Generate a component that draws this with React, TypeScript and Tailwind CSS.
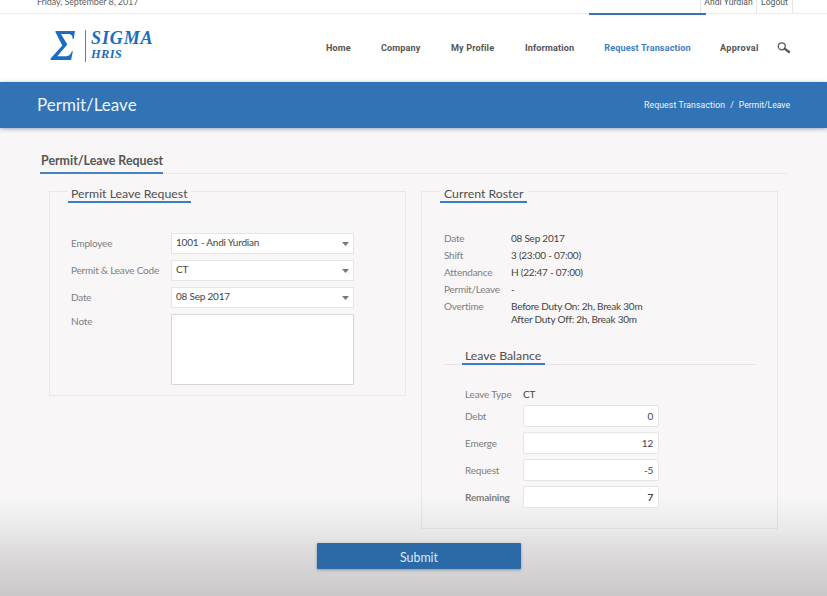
import type { ReactNode } from "react";

const NAV_ITEMS = [
  { label: "Home", className: "ml-0 w-[25px]" },
  { label: "Company", className: "ml-[30px] w-[41px]" },
  { label: "My Profile", className: "ml-[29px] w-[44px]" },
  { label: "Information", className: "ml-[30px] w-[50px]" },
];

const ROSTER = [
  { label: "Date", value: "08 Sep 2017" },
  { label: "Shift", value: "3 (23:00 - 07:00)" },
  { label: "Attendance", value: "H (22:47 - 07:00)" },
  { label: "Permit/Leave", value: "-" },
];

const BALANCE = [
  { label: "Debt", value: "0" },
  { label: "Emerge", value: "12" },
  { label: "Request", value: "-5" },
  { label: "Remaining", value: "7", bold: true },
];

function Legend({ children, className }: { children: ReactNode; className: string }) {
  return (
    <h3
      className={`h-[17px] border-b-2 border-[#3c7fc0] bg-[#f8f6f7] text-[12.3px] leading-[16px] text-[#505050] ${className}`}
    >
      {children}
    </h3>
  );
}

function SelectRow({ label, value }: { label: string; value: string }) {
  return (
    <div className="mb-[6px] flex h-[21px] items-center">
      <label className="w-[100px] text-[10px] tracking-[-0.21px] text-[#808080]">{label}</label>
      <button className="flex h-[21px] w-[183px] items-center justify-between border border-[#e6e4e5] bg-white pr-[4px] pl-[4px] text-[10px] tracking-[-0.21px] text-[#444]">
        <span className="-mt-[2px]">{value}</span>
        <svg width="7" height="4" viewBox="0 0 7 4" className="fill-[#777]">
          <path d="M0 0H7L3.5 4Z" />
        </svg>
      </button>
    </div>
  );
}

export default function App() {
  return (
    <div className="flex h-[596px] w-[827px] flex-col overflow-hidden bg-[linear-gradient(#f8f6f7_0,#f8f6f7_495px,#e9e8e8_532px,#e0dedf_546px,#c9c7c8_596px)] font-[Lato,sans-serif] whitespace-nowrap">
      <div className="flex h-[14px] shrink-0 justify-between overflow-hidden border-b border-[#ececec] bg-white pr-[34px] pl-[37px] text-[#666]">
        <span className="-mt-[5px] text-[9px] leading-[13px] tracking-[-0.1px]">Friday, September 8, 2017</span>
        <div className="flex h-[13px] border-x border-[#e6e6e6] font-[Roboto,sans-serif] text-[8.6px] leading-[13px] text-[#555]">
          <span className="w-[56px] border-r border-[#e6e6e6] text-center">
            <span className="-mt-[4px] block">Andi Yurdian</span>
          </span>
          <span className="w-[35px] text-center">
            <span className="-mt-[4px] block">Logout</span>
          </span>
        </div>
      </div>

      <header className="flex h-[68px] shrink-0 bg-white">
        <div className="flex w-[326px] pt-[16px] pl-[50px]">
          <svg width="26" height="31" viewBox="0 0 26 31" className="fill-[#1b6dc1]">
            <path d="M5.5 1H25L23.7 9H22.7Q22.6 4.3 19 4.1H11L17.3 14.4L7.3 26.2H16.2Q20.3 26 21.9 21.2H22.9L21.1 30H0.6V28.5L12.3 15.4L5.5 2.3Z" />
          </svg>
          <div className="ml-[9px] h-[32px] border-l-[1.5px] border-[#3c88cc] pl-[5px] font-['Liberation_Serif',serif] font-bold text-[#1d6dbd] italic">
            <div className="text-[18px] leading-[17px] tracking-[0.9px]">SIGMA</div>
            <div className="text-[12.5px] leading-[14px] tracking-[0.3px]">HRIS</div>
          </div>
        </div>
        <nav className="flex font-[Roboto,sans-serif] text-[9.1px] leading-[69px] font-bold tracking-[0.12px] text-[#555]">
          {NAV_ITEMS.map((item) => (
            <a key={item.label} className={item.className}>
              {item.label}
            </a>
          ))}
          <a className="-mt-px ml-[14px] w-[117px] border-t-2 border-[#3575b8] text-center leading-[67px] text-[#4280c5]">
            Request Transaction
          </a>
          <a className="ml-[14px] w-[40px] tracking-[0.3px]">Approval</a>
        </nav>
        <svg
          width="14"
          height="12"
          viewBox="0 0 14 12"
          className="mt-[28px] ml-[17px] fill-none stroke-[#555]"
        >
          <circle cx="4.8" cy="4.3" r="3.5" strokeWidth="1.3" />
          <path d="M7.6 6.7L12 10" strokeWidth="2.2" strokeLinecap="round" />
        </svg>
      </header>

      <div className="flex h-[46px] shrink-0 items-center justify-between bg-[#3273b5] pr-[37px] pl-[37px] text-[#eef5fc] shadow-[0_1px_4px_#9aa8b6]">
        <h1 className="text-[17px]">Permit/Leave</h1>
        <div className="flex pt-[2px] font-[Roboto,sans-serif] text-[8.7px]">
          <span className="tracking-[0.1px]">Request Transaction</span>
          <span className="mx-[5px]">/</span>
          <span className="tracking-[-0.05px]">Permit/Leave</span>
        </div>
      </div>

      <main className="flex flex-1 flex-col pt-[25px]">
        <div className="mr-[40px] ml-[40px] h-[21px] border-b border-[#e9e7e8]">
          <h2 className="h-[21px] w-[123px] border-b-2 border-[#4582c0] pl-px text-[12.4px] leading-[16px] font-bold text-[#555]">
            Permit/Leave Request
          </h2>
        </div>

        <div className="mt-[17px] ml-[49px] flex items-start gap-[15px]">
          <section className="h-[205px] w-[357px] border border-black/6 pl-[21px]">
            <Legend className="-mt-[6px] -ml-[3px] w-[123px] pl-[3px]">Permit Leave Request</Legend>
            <div className="mt-[30px]">
              <SelectRow label="Employee" value="1001 - Andi Yurdian" />
              <SelectRow label="Permit & Leave Code" value="CT" />
              <SelectRow label="Date" value="08 Sep 2017" />
              <div className="flex">
                <label className="w-[100px] text-[10px] leading-[15px] tracking-[-0.1px] text-[#808080]">
                  Note
                </label>
                <textarea className="h-[71px] w-[183px] resize-none rounded-[1px] border border-[#d8d6d7] bg-white" />
              </div>
            </div>
          </section>

          <section className="h-[338px] w-[357px] border border-black/6 pl-[22px]">
            <Legend className="-mt-[6px] -ml-[4px] w-[87px] pl-[4px]">Current Roster</Legend>
            <dl className="mt-[27px] text-[10px] tracking-[-0.24px] text-[#444]">
              {ROSTER.map((row) => (
                <div key={row.label} className="flex h-[17px] leading-[17px]">
                  <dt className="w-[67px] text-[#808080]">{row.label}</dt>
                  <dd>{row.value}</dd>
                </div>
              ))}
              <div className="flex pt-[2px] leading-[13px]">
                <dt className="w-[67px] text-[#808080]">Overtime</dt>
                <dd>
                  Before Duty On: 2h, Break 30m
                  <br />
                  After Duty Off: 2h, Break 30m
                </dd>
              </div>
            </dl>

            <div className="mt-[22px] h-[17px] w-[311px] border-b border-[#e6e4e5] pl-[18px]">
              <Legend className="w-[83px] pl-[3px]">Leave Balance</Legend>
            </div>
            <div className="mt-[21px] ml-[21px] text-[10px] tracking-[-0.21px] text-[#808080]">
              <div className="flex h-[17px] leading-[17px]">
                <span className="w-[58px]">Leave Type</span>
                <span className="text-[#444]">CT</span>
              </div>
              <div className="flex flex-col gap-[5px] pt-[2px]">
                {BALANCE.map((row) => (
                  <div
                    key={row.label}
                    className={`flex h-[22px] items-center ${row.bold ? "font-bold" : ""}`}
                  >
                    <label className="w-[58px] pt-px">{row.label}</label>
                    <div className="h-[22px] w-[136px] rounded-[2px] border border-[#e6e4e5] bg-white pr-[5px] text-right text-[10px] leading-[20px] text-[#444]">
                      {row.value}
                    </div>
                  </div>
                ))}
              </div>
            </div>
          </section>
        </div>

        <button className="mt-[14px] ml-[317px] h-[26px] w-[204px] shrink-0 rounded-[1px] bg-[#2b69a7] pt-[4px] text-[12.4px] leading-[22px] text-[#dfeaf5] shadow-[0_1px_3px_#8794a2]">
          Submit
        </button>
      </main>
    </div>
  );
}
